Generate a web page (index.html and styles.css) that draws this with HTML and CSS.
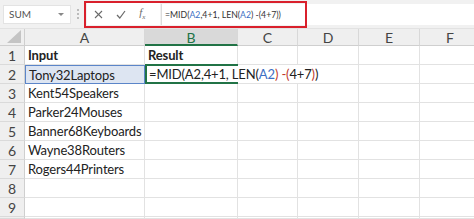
FILE: index.html
```html
<!DOCTYPE html>
<html lang="en">
<head>
    <meta charset="UTF-8">
    <title>Excel MID formula</title>
    <link rel="stylesheet" href="styles.css">
</head>
<body>
    <div class="topbar">
        <div class="namebox">
            <span>SUM</span>
            <span class="caret"></span>
        </div>
        <div class="grip"><i></i><i></i><i></i></div>
        <div class="fx-buttons">
            <svg width="9" height="9" viewBox="0 0 9 9" stroke="#6a6a6a" stroke-width="1.1" fill="none">
                <line x1="1" y1="1" x2="8" y2="8"></line>
                <line x1="8" y1="1" x2="1" y2="8"></line>
            </svg>
            <svg width="10" height="9" viewBox="0 0 10 9" stroke="#6a6a6a" stroke-width="1.2" fill="none">
                <polyline points="1,5 3.8,8 9,1"></polyline>
            </svg>
            <span class="fx">f<sub>x</sub></span>
        </div>
        <div class="formula-input">=MID(<span class="ref">A2</span>,4+1, LEN(<span class="ref">A2</span>) -(4+7))</div>
        <div class="highlight"></div>
    </div>

    <div class="sheet">
        <div class="corner"><span></span></div>
        <div class="col-head">A</div>
        <div class="col-head active">B</div>
        <div class="col-head">C</div>
        <div class="col-head">D</div>
        <div class="col-head">E</div>
        <div class="col-head">F</div>

        <div class="row-head">1</div>
        <div class="cell bold">Input</div>
        <div class="cell bold">Result</div>
        <div class="cell"></div><div class="cell"></div><div class="cell"></div><div class="cell"></div>

        <div class="row-head">2</div>
        <div class="cell ref-cell">Tony32Laptops</div>
        <div class="cell editing">=MID(A2,4+1, LEN(<span class="ref2">A2</span><span class="paren">) -(</span>4+7<span class="paren">)</span>)</div>
        <div class="cell overflow"></div><div class="cell"></div><div class="cell"></div><div class="cell"></div>

        <div class="row-head">3</div>
        <div class="cell">Kent54Speakers</div>
        <div class="cell"></div><div class="cell"></div><div class="cell"></div><div class="cell"></div><div class="cell"></div>

        <div class="row-head">4</div>
        <div class="cell">Parker24Mouses</div>
        <div class="cell"></div><div class="cell"></div><div class="cell"></div><div class="cell"></div><div class="cell"></div>

        <div class="row-head">5</div>
        <div class="cell">Banner68Keyboards</div>
        <div class="cell"></div><div class="cell"></div><div class="cell"></div><div class="cell"></div><div class="cell"></div>

        <div class="row-head">6</div>
        <div class="cell">Wayne38Routers</div>
        <div class="cell"></div><div class="cell"></div><div class="cell"></div><div class="cell"></div><div class="cell"></div>

        <div class="row-head">7</div>
        <div class="cell">Rogers44Printers</div>
        <div class="cell"></div><div class="cell"></div><div class="cell"></div><div class="cell"></div><div class="cell"></div>

        <div class="row-head">8</div>
        <div class="cell"></div><div class="cell"></div><div class="cell"></div><div class="cell"></div><div class="cell"></div><div class="cell"></div>

        <div class="row-head">9</div>
        <div class="cell"></div><div class="cell"></div><div class="cell"></div><div class="cell"></div><div class="cell"></div><div class="cell"></div>

        <div class="row-head"></div>
        <div class="cell"></div><div class="cell"></div><div class="cell"></div><div class="cell"></div><div class="cell"></div><div class="cell"></div>
    </div>
</body>
</html>
```

FILE: styles.css
```css
* {
    margin: 0;
    padding: 0;
    box-sizing: border-box;
}

body {
    width: 474px;
    height: 219px;
    overflow: hidden;
    background-color: white;
    font-family: 'Lato', 'Liberation Sans', sans-serif;
    color: #222;
}

.topbar {
    position: relative;
    height: 29px;
    display: flex;
    align-items: center;
    background-color: #f1f1f1;
    border-bottom: 1px solid #e2e2e2;
}

.namebox {
    margin-left: 3px;
    width: 68px;
    height: 19px;
    background-color: white;
    border: 1px solid #e3e3e3;
    display: flex;
    align-items: center;
    justify-content: space-between;
    padding: 0 6px 0 5px;
    font-size: 10px;
    color: #555;
}

.caret {
    width: 0;
    height: 0;
    border-left: 3px solid transparent;
    border-right: 3px solid transparent;
    border-top: 3px solid #888;
}

.grip {
    width: 13px;
    display: flex;
    flex-direction: column;
    align-items: center;
    gap: 2px;
}

.grip i {
    width: 2px;
    height: 2px;
    background-color: #bbb;
}

.fx-buttons {
    margin-left: 3px;
    width: 73px;
    height: 22px;
    background-color: white;
    display: flex;
    align-items: center;
    justify-content: space-around;
    padding: 0 8px 0 0;
}

.fx {
    font-family: 'Liberation Serif', serif;
    font-style: italic;
    font-size: 11px;
    color: #6a6a6a;
}

.fx sub {
    font-size: 7px;
}

.formula-input {
    flex: 1;
    height: 21px;
    margin-left: 1px;
    background-color: white;
    border-left: 1px solid #dcdcdc;
    display: flex;
    align-items: center;
    padding-left: 3px;
    font-family: 'Lato', sans-serif;
    font-size: 8.7px;
    color: #333;
    white-space: pre;
}

.formula-input .ref {
    color: #3b6fc4;
}

.highlight {
    position: absolute;
    left: 84px;
    top: 1px;
    width: 223px;
    height: 27px;
    border: 2.5px solid #d9202c;
}

.sheet {
    display: grid;
    grid-template-columns: 25px 120px 93px 60px 61px 61px 61px;
    grid-template-rows: 17px repeat(9, 19px) 2px;
}

.corner {
    background-color: #efefef;
    border-right: 1px solid #cfcfcf;
    border-bottom: 1px solid #cfcfcf;
    display: flex;
    align-items: flex-end;
    justify-content: flex-end;
    padding: 0 3px 2px 0;
}

.corner span {
    width: 0;
    height: 0;
    border-left: 14px solid transparent;
    border-bottom: 13px solid #c4c4c4;
}

.col-head {
    background-color: #efefef;
    border-right: 1px solid #d8d8d8;
    border-bottom: 1px solid #cfcfcf;
    text-align: center;
    font-size: 14px;
    line-height: 17px;
    color: #444;
}

.col-head.active {
    background-color: #d9d9d9;
    color: #217346;
    border-bottom: 2px solid #217346;
}

.row-head {
    background-color: #efefef;
    border-right: 1px solid #cfcfcf;
    border-bottom: 1px solid #dadada;
    text-align: center;
    font-size: 14px;
    line-height: 19px;
    color: #444;
}

.cell {
    border-right: 1px solid #e2e2e2;
    border-bottom: 1px solid #e2e2e2;
    font-size: 13px;
    line-height: 19px;
    letter-spacing: -0.15px;
    padding-left: 3px;
    white-space: nowrap;
}

.bold {
    font-weight: 700;
}

.ref-cell {
    background-color: #dde5f2;
    border: 1px solid #5b85c9;
}

.editing {
    position: relative;
    z-index: 1;
    padding-left: 2px;
    border-right: none;
    border-top: 2px solid #217346;
    border-bottom: 2px solid #217346;
    border-left: 2px solid #217346;
    margin-top: -1px;
    line-height: 16px;
}

.overflow {
    border-right: none;
}

.ref2 {
    color: #3b6fc4;
}

.paren {
    color: #c0392b;
}
```
